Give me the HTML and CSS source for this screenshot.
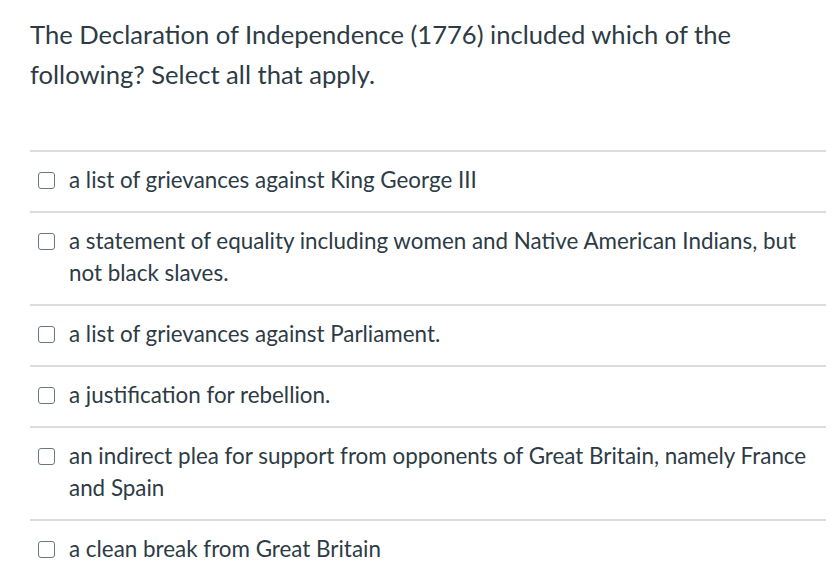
FILE: index.html
```html
<!DOCTYPE html>
<html>
<head>
<meta charset="utf-8">
<link rel="stylesheet" href="styles.css">
</head>
<body>
<div class="quiz">
  <div class="question">The Declaration of Independence (1776) included which of the following? Select all that apply.</div>
  <div class="answers">
    <label class="answer"><span class="box"></span><span class="text">a list of grievances against King George III</span></label>
    <label class="answer"><span class="box"></span><span class="text">a statement of equality including women and Native American Indians, but not black slaves.</span></label>
    <label class="answer"><span class="box"></span><span class="text">a list of grievances against Parliament.</span></label>
    <label class="answer"><span class="box"></span><span class="text">a justification for rebellion.</span></label>
    <label class="answer"><span class="box"></span><span class="text">an indirect plea for support from opponents of Great Britain, namely France and Spain</span></label>
    <label class="answer"><span class="box"></span><span class="text">a clean break from Great Britain</span></label>
  </div>
</div>
</body>
</html>
```

FILE: styles.css
```css
html, body {
  margin: 0;
  padding: 0;
  background: #ffffff;
}
body {
  font-family: Lato, "Open Sans", sans-serif;
  color: #2d3b45;
}
.quiz {
  width: 796px;
  padding: 14px 0 0 30px;
}
.question {
  font-size: 25.6px;
  line-height: 40px;
  margin-bottom: 56px;
}
.answers {
  display: flex;
  flex-direction: column;
}
.answer {
  display: flex;
  align-items: flex-start;
  border-top: 2px solid #dcdcdc;
  padding: 11.5px 0 15.5px;
  font-size: 22.4px;
  line-height: 32px;
}
.box {
  flex: none;
  width: 15px;
  height: 15px;
  border: 1.5px solid #6b7780;
  border-radius: 3px;
  margin: 8px 14px 0 8px;
}
.text {
  flex: 1;
}
```
